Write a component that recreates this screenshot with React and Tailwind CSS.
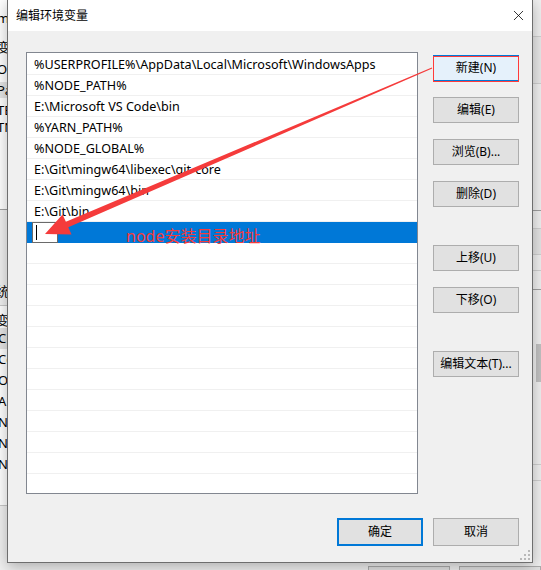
import { X } from 'lucide-react'

const paths = [
  '%USERPROFILE%\\AppData\\Local\\Microsoft\\WindowsApps',
  '%NODE_PATH%',
  'E:\\Microsoft VS Code\\bin',
  '%YARN_PATH%',
  '%NODE_GLOBAL%',
  'E:\\Git\\mingw64\\libexec\\git-core',
  'E:\\Git\\mingw64\\bin',
  'E:\\Git\\bin',
]

const font = "font-['Segoe_UI','Noto_Sans','Noto_Sans_CJK_SC',sans-serif]"

function WinButton({ children, focused, className = '' }) {
  return (
    <div
      className={`relative flex h-[26px] w-[86px] items-center justify-center border text-[12px] text-black ${
        focused ? 'border-[#0078d7] bg-[#e5f1fb]' : 'border-[#adadad] bg-[#e1e1e1]'
      } ${className}`}
    >
      {children}
      {/* red annotation box around the focused button */}
      {focused && <div className="absolute -left-px top-0 h-[26px] w-[86px] border border-[#ff3b3b]" />}
    </div>
  )
}

// bits of the window that sits behind the dialog
function BackWindow() {
  const leftItems = [
    { y: 'mt-[10px]', t: 'm' },
    { y: 'mt-[13px]', t: '变' },
    { y: 'mt-[6px]', t: 'O' },
    { y: 'mt-[5px]', t: 'Pa', hl: true },
    { y: 'mt-[4px]', t: 'TE' },
    { y: 'mt-[1px]', t: 'TN' },
  ]
  const lowerItems = ['CL', 'Co', 'Or', 'A', 'N', 'N', 'N']
  return (
    <>
      <div className="absolute left-0 top-0 h-[570px] w-[8px] overflow-hidden bg-[#f0f0f0] text-[13px] text-black">
        <div className="flex h-[210px] flex-col border-b border-[#a0a0a0] bg-white">
          {leftItems.map((it, i) => (
            <div key={i} className={`${it.y} h-[16px] leading-[16px] -ml-[3px] ${it.hl ? 'bg-[#e5e5e5]' : ''}`}>
              {it.t}
            </div>
          ))}
        </div>
        <div className="mt-[73px] h-[22px] -ml-[4px] leading-[16px]">统</div>
        <div className="border-t border-[#c8c8c8] bg-white">
          <div className="h-[22px] pt-[6px] -ml-[4px] leading-[16px]">变</div>
          {lowerItems.map((t, i) => (
            <div key={i} className={`h-[21px] leading-[21px] -ml-[2px] ${i === 0 ? 'bg-[#e5e5e5]' : ''}`}>
              {t}
            </div>
          ))}
          <div className="h-[30px]" />
        </div>
        <div className="h-[62px] border-t border-[#c8c8c8]" />
        <div className="border-t border-[#c8c8c8]" />
      </div>
      <div className="absolute right-0 top-0 flex h-[570px] w-[9px] flex-col bg-[#f0f0f0]">
        <div className="mt-[36px] h-[48px] border-y border-[#d0d0d0] bg-[#e8e8e8]" />
        <div className="mt-[126px] h-[18px] border-t border-[#a0a0a0]" />
        <div className="h-[26px] border-t border-[#d0d0d0] bg-[#e4e4e4]" />
        <div className="h-[16px] border-t border-[#d0d0d0]" />
        <div className="h-[19px] border-t border-[#d0d0d0]" />
        <div className="flex h-[175px] border-t border-[#a0a0a0]">
          <div className="ml-[4px] mt-[54px] h-[38px] w-[5px] bg-[#c2c2c2]" />
        </div>
        <div className="h-[16px] border-t border-[#d0d0d0]" />
        <div className="border-t border-[#d0d0d0]" />
      </div>
      <div className="absolute bottom-0 left-0 flex h-[7px] w-[541px] items-end bg-[#f0f0f0]">
        <div className="ml-[368px] h-[4px] w-[86px] border-x border-t border-[#adadad] bg-[#e1e1e1]" />
        <div className="ml-[9px] h-[4px] w-[86px] border-x border-t border-[#adadad] bg-[#e1e1e1]" />
      </div>
    </>
  )
}

function Arrow() {
  return (
    <svg className="pointer-events-none absolute left-0 top-0" width="541" height="570" viewBox="0 0 541 570">
      <polygon
        points="432.2,68.5 68.3,227.3 71.5,234.5 45,234 62.5,214.5 65.9,221.7 431.8,67.5"
        fill="#f53b3b"
      />
    </svg>
  )
}

export default function App() {
  const rows = Array.from({ length: 21 }, (_, i) => paths[i] ?? '')
  return (
    <div className={`relative h-[570px] w-[541px] overflow-hidden bg-[#f0f0f0] ${font}`}>
      <BackWindow />

      {/* dialog window */}
      <div className="absolute left-[7px] top-[-1px] flex h-[564px] w-[526px] flex-col border border-[#6e6e6e] bg-[#f0f0f0] shadow-[0_4px_14px_rgba(0,0,0,0.28)]">
        <div className="flex h-[31px] items-center justify-between bg-white pl-[8px] pr-[5px]">
          <span className="pt-[1px] text-[12px] text-black">编辑环境变量</span>
          <X size={17} strokeWidth={1.1} className="text-black" />
        </div>

        <div className="flex gap-[15px] pl-[18px] pr-[13px] pt-[21px]">
          <div className="h-[442px] w-[392px] overflow-hidden border border-[#828790] bg-white pt-[1px]">
            {rows.map((p, i) =>
              i === 8 ? (
                <div key={i} className="flex h-[21px] items-stretch bg-[#0078d7] pl-[5px]">
                  <div className="flex h-[21px] w-[26px] items-center border border-[#6a6a6a] bg-white pl-[3px]">
                    <div className="h-[15px] w-px bg-black" />
                  </div>
                </div>
              ) : (
                <div key={i} className="h-[21px] truncate border-b border-[#f0f0f0] pl-[7px] pt-[1px] text-[12.6px] leading-[19px] text-black">
                  {p}
                </div>
              )
            )}
          </div>

          <div className="flex flex-col pt-[3px]">
            <WinButton focused>新建(N)</WinButton>
            <WinButton className="mt-[16px]">编辑(E)</WinButton>
            <WinButton className="mt-[16px]">浏览(B)...</WinButton>
            <WinButton className="mt-[16px]">删除(D)</WinButton>
            <WinButton className="mt-[38px]">上移(U)</WinButton>
            <WinButton className="mt-[16px]">下移(O)</WinButton>
            <WinButton className="mt-[38px]">编辑文本(T)...</WinButton>
          </div>
        </div>

        <div className="flex justify-end gap-[10px] pr-[13px] pt-[24px]">
          <div className="flex h-[28px] w-[86px] items-center justify-center border-2 border-[#0078d7] bg-[#e1e1e1] text-[12px] text-black">
            确定
          </div>
          <div className="flex h-[28px] w-[86px] items-center justify-center border border-[#adadad] bg-[#e1e1e1] text-[12px] text-black">
            取消
          </div>
        </div>

        {/* resize grip */}
        <div className="mt-auto flex justify-end pb-[2px] pr-[2px]">
          <svg width="10" height="10" viewBox="0 0 10 10">
            <rect x="8" y="0" width="2" height="2" fill="#b8b8b8" />
            <rect x="4" y="4" width="2" height="2" fill="#b8b8b8" />
            <rect x="8" y="4" width="2" height="2" fill="#b8b8b8" />
            <rect x="0" y="8" width="2" height="2" fill="#b8b8b8" />
            <rect x="4" y="8" width="2" height="2" fill="#b8b8b8" />
            <rect x="8" y="8" width="2" height="2" fill="#b8b8b8" />
          </svg>
        </div>
      </div>

      <Arrow />
      <div className="pointer-events-none absolute left-[126px] top-[226px] font-['Noto_Sans','Noto_Sans_CJK_SC',sans-serif] text-[16px] leading-[20px] text-[#f53b3b]">
        node安装目录地址
      </div>
    </div>
  )
}
